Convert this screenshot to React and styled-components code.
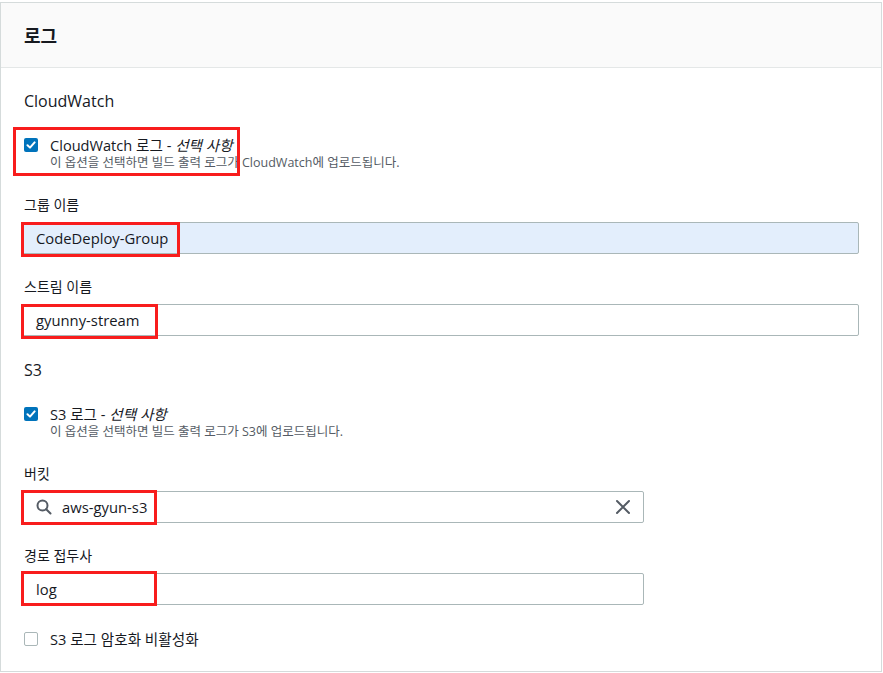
import styled, { createGlobalStyle } from "styled-components";

const GlobalStyle = createGlobalStyle`
    body {
        margin: 0;
        background: #ffffff;
        font-family: "Open Sans", "Noto Sans CJK KR", sans-serif;
        color: #16191f;
    }
`;

const Panel = styled.section`
    margin-top: 2px;
    width: 882px;
    height: 670px;
    box-sizing: border-box;
    border: 1px solid #d5dbdb;
    display: flex;
    flex-direction: column;
`;

const Header = styled.header`
    height: 64px;
    flex-shrink: 0;
    background: #fafafa;
    border-bottom: 1px solid #e4e7e7;
    display: flex;
    align-items: center;
    padding: 0 23px;
`;

const Title = styled.h2`
    margin: 0;
    font-size: 18px;
    font-weight: 700;
    color: #16191f;
`;

const Body = styled.div`
    padding: 23px 21px 0 21px;
    display: flex;
    flex-direction: column;
    gap: 24px;
`;

const SectionTitle = styled.div`
    font-size: 16px;
    line-height: 20px;
    padding-left: 2px;
`;

const CheckRow = styled.div`
    display: flex;
    align-items: flex-start;
    gap: 12px;
    padding-left: 2px;
`;

const Box = styled.span`
    flex-shrink: 0;
    margin-top: 3px;
    width: 14px;
    height: 14px;
    box-sizing: border-box;
    border-radius: 2px;
    display: flex;
    align-items: center;
    justify-content: center;
    background: ${({ checked }) => (checked ? "#0073bb" : "#ffffff")};
    border: ${({ checked }) => (checked ? "none" : "1px solid #aab7b8")};
`;

const CheckText = styled.div`
    display: flex;
    flex-direction: column;
`;

const CheckLabel = styled.div`
    position: relative;
    font-size: 14.6px;
    line-height: 20px;
    color: #16191f;
    white-space: nowrap;

    em {
        font-style: italic;
    }
`;

const CheckDesc = styled.div`
    font-size: 12.5px;
    line-height: 16px;
    color: #545b64;
`;

const Field = styled.div`
    display: flex;
    flex-direction: column;
    gap: 7px;

    & + & {
        margin-top: -1px;
    }
`;

const FieldLabel = styled.div`
    font-size: 14px;
    line-height: 20px;
    padding-left: 2px;
    color: #16191f;
`;

const InputBox = styled.div`
    position: relative;
    height: 32px;
    width: ${({ narrow }) => (narrow ? "622px" : "837px")};
    box-sizing: border-box;
    border: 1px solid #aab7b8;
    border-radius: 2px;
    background: ${({ filled }) => (filled ? "#e3eefc" : "#ffffff")};
    display: flex;
    align-items: center;
    gap: 10px;
    padding: 0 12px 0 13px;
    font-size: 14.8px;
    color: #16191f;
`;

const Value = styled.span`
    flex: 1;
`;

const Mark = styled.span`
    position: absolute;
    border: 3px solid #f81d1d;
    box-sizing: border-box;
    pointer-events: none;
`;

const Check = () => (
    <svg width="10" height="10" viewBox="0 0 10 10">
        <path
            d="M1.5 5.2 L4 7.6 L8.6 2.4"
            fill="none"
            stroke="#fff"
            strokeWidth="2"
            strokeLinecap="round"
            strokeLinejoin="round"
        />
    </svg>
);

const SearchIcon = () => (
    <svg width="16" height="16" viewBox="0 0 16 16">
        <circle cx="6.5" cy="6.5" r="5" fill="none" stroke="#545b64" strokeWidth="2" />
        <path d="M10.2 10.2 L14.5 14.5" stroke="#545b64" strokeWidth="2" strokeLinecap="round" />
    </svg>
);

const ClearIcon = () => (
    <svg width="16" height="16" viewBox="0 0 16 16">
        <path
            d="M2 2 L14 14 M14 2 L2 14"
            stroke="#545b64"
            strokeWidth="2"
            strokeLinecap="round"
        />
    </svg>
);

const App = () => {
    return (
        <>
            <GlobalStyle />
            <Panel>
                <Header>
                    <Title>로그</Title>
                </Header>
                <Body>
                    <SectionTitle>CloudWatch</SectionTitle>
                    <CheckRow>
                        <Box checked>
                            <Check />
                        </Box>
                        <CheckText>
                            <CheckLabel>
                                CloudWatch 로그 - <em>선택 사항</em>
                                <Mark style={{ left: -37, top: -8, width: 227, height: 49 }} />
                            </CheckLabel>
                            <CheckDesc>
                                이 옵션을 선택하면 빌드 출력 로그가 CloudWatch에 업로드됩니다.
                            </CheckDesc>
                        </CheckText>
                    </CheckRow>

                    <Field>
                        <FieldLabel>그룹 이름</FieldLabel>
                        <InputBox filled>
                            <Value>CodeDeploy-Group</Value>
                            <Mark style={{ left: -2, top: -1, width: 159, height: 35 }} />
                        </InputBox>
                    </Field>

                    <Field>
                        <FieldLabel>스트림 이름</FieldLabel>
                        <InputBox>
                            <Value>gyunny-stream</Value>
                            <Mark style={{ left: -2, top: -1, width: 137, height: 35 }} />
                        </InputBox>
                    </Field>

                    <SectionTitle>S3</SectionTitle>
                    <CheckRow>
                        <Box checked>
                            <Check />
                        </Box>
                        <CheckText>
                            <CheckLabel>
                                S3 로그 - <em>선택 사항</em>
                            </CheckLabel>
                            <CheckDesc>
                                이 옵션을 선택하면 빌드 출력 로그가 S3에 업로드됩니다.
                            </CheckDesc>
                        </CheckText>
                    </CheckRow>

                    <Field>
                        <FieldLabel>버킷</FieldLabel>
                        <InputBox narrow>
                            <SearchIcon />
                            <Value>aws-gyun-s3</Value>
                            <ClearIcon />
                            <Mark style={{ left: -2, top: -2, width: 136, height: 35 }} />
                        </InputBox>
                    </Field>

                    <Field>
                        <FieldLabel>경로 접두사</FieldLabel>
                        <InputBox narrow>
                            <Value>log</Value>
                            <Mark style={{ left: -2, top: -3, width: 136, height: 35 }} />
                        </InputBox>
                    </Field>

                    <CheckRow>
                        <Box />
                        <CheckText>
                            <CheckLabel>S3 로그 암호화 비활성화</CheckLabel>
                        </CheckText>
                    </CheckRow>
                </Body>
            </Panel>
        </>
    );
};

export default App;
